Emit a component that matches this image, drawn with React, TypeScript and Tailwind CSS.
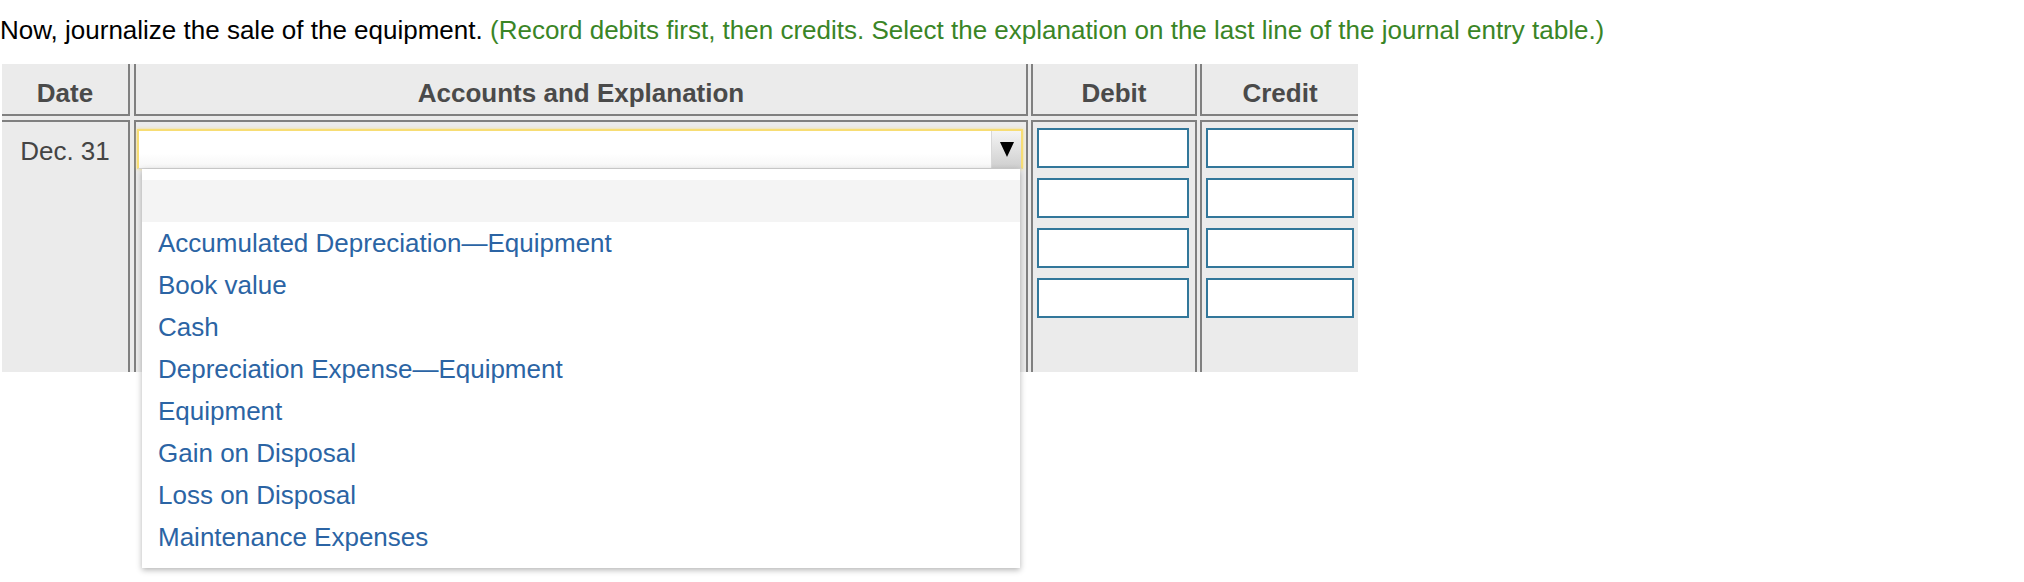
import React from 'react';

const options = [
  'Accumulated Depreciation\u2014Equipment',
  'Book value',
  'Cash',
  'Depreciation Expense\u2014Equipment',
  'Equipment',
  'Gain on Disposal',
  'Loss on Disposal',
  'Maintenance Expenses',
];

function AmountInput({ width }: { width: string }) {
  return <div className={`h-[40px] ${width} border-2 border-[#32779a] bg-white`} />;
}

export default function App() {
  return (
    <div className="relative w-[2024px] h-[582px] overflow-hidden bg-white font-['Liberation_Sans',Arial,sans-serif] text-[26px]">
      {/* prompt */}
      <p className="pt-[15px] leading-[30px] text-black">
        Now, journalize the sale of the equipment.{' '}
        <span className="text-[#3a8526]">
          (Record debits first, then credits. Select the explanation on the last line of the journal entry table.)
        </span>
      </p>

      {/* journal table */}
      <div className="mt-[19px] ml-[2px] w-[1356px] bg-[#ebebeb]">
        {/* header */}
        <div className="flex h-[52px] font-bold text-[#4a4a4a] leading-[30px]">
          <div className="w-[128px] border-r-2 border-b-2 border-[#808080] pt-[14px] text-center">Date</div>
          <div className="w-[4px]" />
          <div className="w-[894px] border-x-2 border-b-2 border-[#808080] pt-[14px] text-center">
            Accounts and Explanation
          </div>
          <div className="w-[3px]" />
          <div className="w-[166px] border-x-2 border-b-2 border-[#808080] pt-[14px] text-center">Debit</div>
          <div className="w-[3px]" />
          <div className="flex-1 border-l-2 border-b-2 border-[#808080] pt-[14px] text-center">Credit</div>
        </div>

        {/* body */}
        <div className="mt-[4px] flex h-[252px]">
          <div className="w-[128px] border-r-2 border-t-2 border-[#808080] pt-[14px] text-center leading-[30px] text-[#444]">
            Dec. 31
          </div>
          <div className="w-[4px]" />
          <div className="relative w-[894px] border-x-2 border-t-2 border-[#808080]">
            {/* select */}
            <div className="mt-[7px] ml-[1px] flex h-[40px] w-[886px] border-2 border-b border-[#f7dd74] border-b-[#d4d4d4] bg-gradient-to-b from-white from-60% to-[#f6f6f6] shadow-[0_0_3px_rgba(246,220,120,0.9)]">
              <div className="flex-1" />
              <div className="flex w-[30px] items-center justify-center border-l border-[#d8d8d8] bg-gradient-to-b from-[#f4f4f4] to-[#cfcfcf]">
                <svg width="14" height="15" viewBox="0 0 14 15">
                  <polygon points="0,0 14,0 7,15" fill="#000" />
                </svg>
              </div>
            </div>

            {/* open dropdown list */}
            <div className="absolute left-[6px] top-[47px] z-10 w-[878px] bg-white pt-[11px] pb-[10px] shadow-[0_2px_6px_rgba(0,0,0,0.3)]">
              <div className="h-[42px] bg-[#f4f4f4]" />
              {options.map((o) => (
                <div key={o} className="h-[42px] pl-[16px] leading-[42px] text-[#2b64a4]">
                  {o}
                </div>
              ))}
            </div>
          </div>
          <div className="w-[3px]" />
          <div className="flex w-[166px] flex-col gap-[10px] border-x-2 border-t-2 border-[#808080] pl-[4px] pt-[6px]">
            <AmountInput width="w-[152px]" />
            <AmountInput width="w-[152px]" />
            <AmountInput width="w-[152px]" />
            <AmountInput width="w-[152px]" />
          </div>
          <div className="w-[3px]" />
          <div className="flex flex-1 flex-col gap-[10px] border-l-2 border-t-2 border-[#808080] pl-[4px] pt-[6px]">
            <AmountInput width="w-[148px]" />
            <AmountInput width="w-[148px]" />
            <AmountInput width="w-[148px]" />
            <AmountInput width="w-[148px]" />
          </div>
        </div>
      </div>
    </div>
  );
}
